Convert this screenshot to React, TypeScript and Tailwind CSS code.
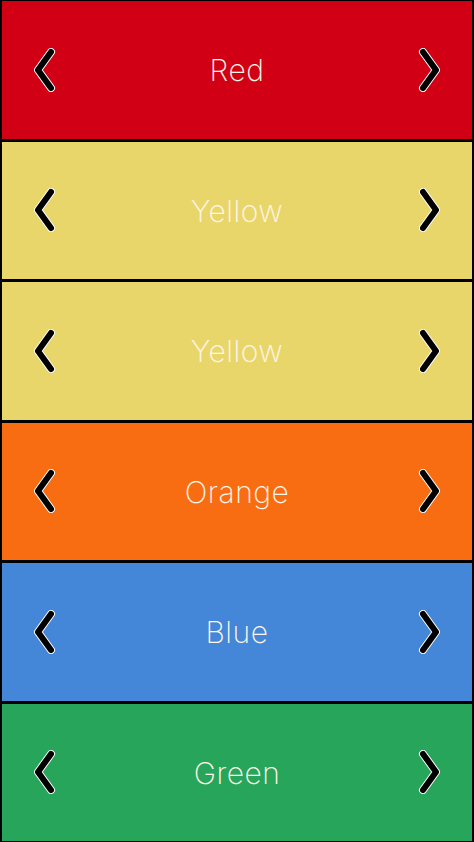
import React from "react";

type Swatch = {
  name: string;
  bg: string;
};

const swatches: Swatch[] = [
  { name: "Red", bg: "bg-[#d10014]" },
  { name: "Yellow", bg: "bg-[#e9d66a]" },
  { name: "Yellow", bg: "bg-[#e9d66a]" },
  { name: "Orange", bg: "bg-[#f96d12]" },
  { name: "Blue", bg: "bg-[#4486d8]" },
  { name: "Green", bg: "bg-[#27a55b]" },
];

// Outlined chevron: white halo under a thick black stroke
function Chevron({ dir }: { dir: "left" | "right" }) {
  const d = dir === "left" ? "M17 4 L4 22 L17 40" : "M5 4 L18 22 L5 40";
  return (
    <svg width="22" height="44" viewBox="0 0 22 44" fill="none">
      <path d={d} stroke="#ffffff" strokeWidth="8" strokeLinecap="round" strokeLinejoin="round" />
      <path d={d} stroke="#000000" strokeWidth="6" strokeLinecap="round" strokeLinejoin="round" />
    </svg>
  );
}

function ColorRow({ name, bg }: Swatch) {
  return (
    <div className={`flex-1 flex items-center justify-between px-[32px] ${bg}`}>
      <Chevron dir="left" />
      <span className="pt-[2px] text-[30px] font-extralight tracking-[0.5px] text-[#fff6ea] font-['Inter',sans-serif]">
        {name}
      </span>
      <Chevron dir="right" />
    </div>
  );
}

export default function App() {
  return (
    <div className="w-[474px] h-[842px] bg-black flex flex-col gap-[3px] px-[2px] py-[1px]">
      {swatches.map((s, i) => (
        <ColorRow key={i} {...s} />
      ))}
    </div>
  );
}
